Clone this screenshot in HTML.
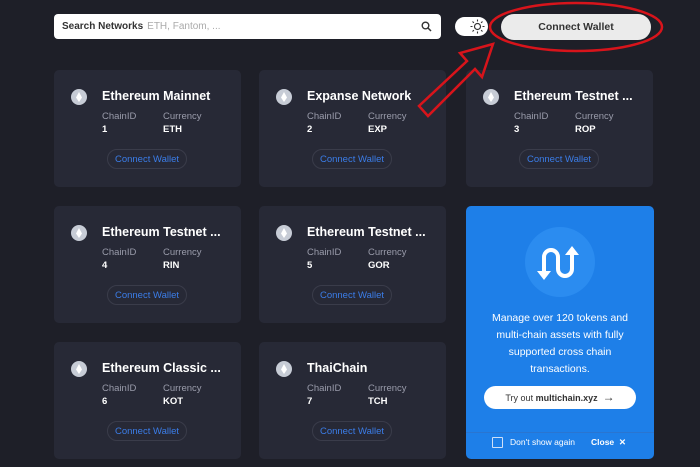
<!DOCTYPE html>
<html><head><style>
*{margin:0;padding:0;box-sizing:border-box}
body{width:700px;height:467px;background:#1e1f28;font-family:"Liberation Sans",sans-serif;position:relative;overflow:hidden;color:#fff}
.search{position:absolute;left:54px;top:14px;width:387px;height:25px;background:#fff;border-radius:4px;font-size:10px;line-height:25px;padding-left:8px;color:#333}
.search b{color:#333}.search span{color:#aaa;margin-left:4px}
.toggle{position:absolute;left:455px;top:17px;width:33px;height:19px;background:#fff;border-radius:10px}
.cw{position:absolute;left:501px;top:14px;width:150px;height:26px;background:#ebebeb;border-radius:13px;color:#333;font-size:10.5px;font-weight:bold;text-align:center;line-height:26px}
.card{position:absolute;width:187px;height:117px;background:#272936;border-radius:5px}
.ic{position:absolute;left:17px;top:19px;width:16px;height:16px;border-radius:50%;background:#c7ccd6}
.ic:after{content:"";position:absolute;left:5px;top:3px;width:6px;height:10px;background:#fff;clip-path:polygon(50% 0,100% 55%,50% 100%,0 55%)}
.t{position:absolute;left:48px;top:19px;font-size:12.5px;font-weight:bold;white-space:nowrap}
.l{position:absolute;top:41px;font-size:9.5px;color:#9a9cab}
.v{position:absolute;top:54px;font-size:9.5px;font-weight:bold}
.btn{position:absolute;left:53px;top:79px;width:80px;height:20px;border:1px solid #3a3c4a;border-radius:10px;color:#3b7de8;font-size:9.5px;display:flex;align-items:center;justify-content:center}
.blue{position:absolute;left:466px;top:206px;width:188px;height:253px;background:#1e7fe8;border-radius:5px}
</style></head><body>
<div class="search"><b>Search Networks</b><span>ETH, Fantom, ...</span>
<svg style="position:absolute;right:9px;top:7px" width="11" height="11" viewBox="0 0 11 11"><circle cx="4.5" cy="4.5" r="3.3" fill="none" stroke="#333" stroke-width="1.4"/><path d="M7 7l3 3" stroke="#333" stroke-width="1.5"/></svg></div>
<div class="toggle"><svg style="position:absolute;left:15px;top:2px" width="15" height="15" viewBox="0 0 15 15"><circle cx="7.5" cy="7.5" r="3" fill="none" stroke="#333" stroke-width="1.2"/><g stroke="#333" stroke-width="1.1"><path d="M7.5 0.5v2M7.5 12.5v2M0.5 7.5h2M12.5 7.5h2M2.5 2.5l1.4 1.4M11.1 11.1l1.4 1.4M2.5 12.5l1.4-1.4M11.1 3.9l1.4-1.4"/></g></svg></div>
<div class="cw">Connect Wallet</div>

<div class="card" style="left:54px;top:70px"><div class="ic"></div><div class="t">Ethereum Mainnet</div><div class="l" style="left:48px">ChainID</div><div class="l" style="left:109px">Currency</div><div class="v" style="left:48px">1</div><div class="v" style="left:109px">ETH</div><div class="btn">Connect Wallet</div></div>
<div class="card" style="left:259px;top:70px"><div class="ic"></div><div class="t">Expanse Network</div><div class="l" style="left:48px">ChainID</div><div class="l" style="left:109px">Currency</div><div class="v" style="left:48px">2</div><div class="v" style="left:109px">EXP</div><div class="btn">Connect Wallet</div></div>
<div class="card" style="left:466px;top:70px"><div class="ic"></div><div class="t">Ethereum Testnet ...</div><div class="l" style="left:48px">ChainID</div><div class="l" style="left:109px">Currency</div><div class="v" style="left:48px">3</div><div class="v" style="left:109px">ROP</div><div class="btn">Connect Wallet</div></div>
<div class="card" style="left:54px;top:206px"><div class="ic"></div><div class="t">Ethereum Testnet ...</div><div class="l" style="left:48px">ChainID</div><div class="l" style="left:109px">Currency</div><div class="v" style="left:48px">4</div><div class="v" style="left:109px">RIN</div><div class="btn">Connect Wallet</div></div>
<div class="card" style="left:259px;top:206px"><div class="ic"></div><div class="t">Ethereum Testnet ...</div><div class="l" style="left:48px">ChainID</div><div class="l" style="left:109px">Currency</div><div class="v" style="left:48px">5</div><div class="v" style="left:109px">GOR</div><div class="btn">Connect Wallet</div></div>
<div class="card" style="left:54px;top:342px"><div class="ic"></div><div class="t">Ethereum Classic ...</div><div class="l" style="left:48px">ChainID</div><div class="l" style="left:109px">Currency</div><div class="v" style="left:48px">6</div><div class="v" style="left:109px">KOT</div><div class="btn">Connect Wallet</div></div>
<div class="card" style="left:259px;top:342px"><div class="ic"></div><div class="t">ThaiChain</div><div class="l" style="left:48px">ChainID</div><div class="l" style="left:109px">Currency</div><div class="v" style="left:48px">7</div><div class="v" style="left:109px">TCH</div><div class="btn">Connect Wallet</div></div>

<div class="blue">
<div style="position:absolute;left:59px;top:21px;width:70px;height:70px;border-radius:50%;background:#2b8cf0"></div>
<svg style="position:absolute;left:59px;top:21px" width="70" height="70" viewBox="0 0 70 70"><path d="M19 46V30a7 7 0 0 1 14 0v12a7 7 0 0 0 14 0V26" fill="none" stroke="#fff" stroke-width="4"/><path d="M12 44h14l-7 9z M40 28h14l-7-9z" fill="#fff"/></svg>
<div style="position:absolute;left:0;top:104px;width:188px;text-align:center;font-size:10.5px;line-height:17px">Manage over 120 tokens and<br>multi-chain assets with fully<br>supported cross chain<br>transactions.</div>
<div style="position:absolute;left:18px;top:180px;width:152px;height:23px;background:#fff;border-radius:12px;color:#333;font-size:9px;text-align:center;line-height:23px">Try out <b>multichain.xyz</b> &nbsp;<span style="font-size:12px">→</span></div>
<div style="position:absolute;left:0;top:226px;width:188px;border-top:1px solid #2a75d0"></div>
<div style="position:absolute;left:26px;top:231px;width:11px;height:11px;border:1.5px solid #cfe0f8;border-radius:1px"></div>
<div style="position:absolute;left:44px;top:231px;font-size:8.5px">Don't show again</div>
<div style="position:absolute;left:125px;top:231px;font-size:8.5px;font-weight:bold">Close &nbsp;✕</div>
</div>

<svg style="position:absolute;left:0;top:0" width="700" height="467"><ellipse cx="576" cy="27" rx="86" ry="24" fill="none" stroke="#d8141b" stroke-width="2.5"/>
<path d="M493 44 L460 53 L467 61 L419 106 L428 116 L475 69 L482 77 Z" fill="none" stroke="#d8141b" stroke-width="2.5" stroke-linejoin="miter"/></svg>
</body></html>
